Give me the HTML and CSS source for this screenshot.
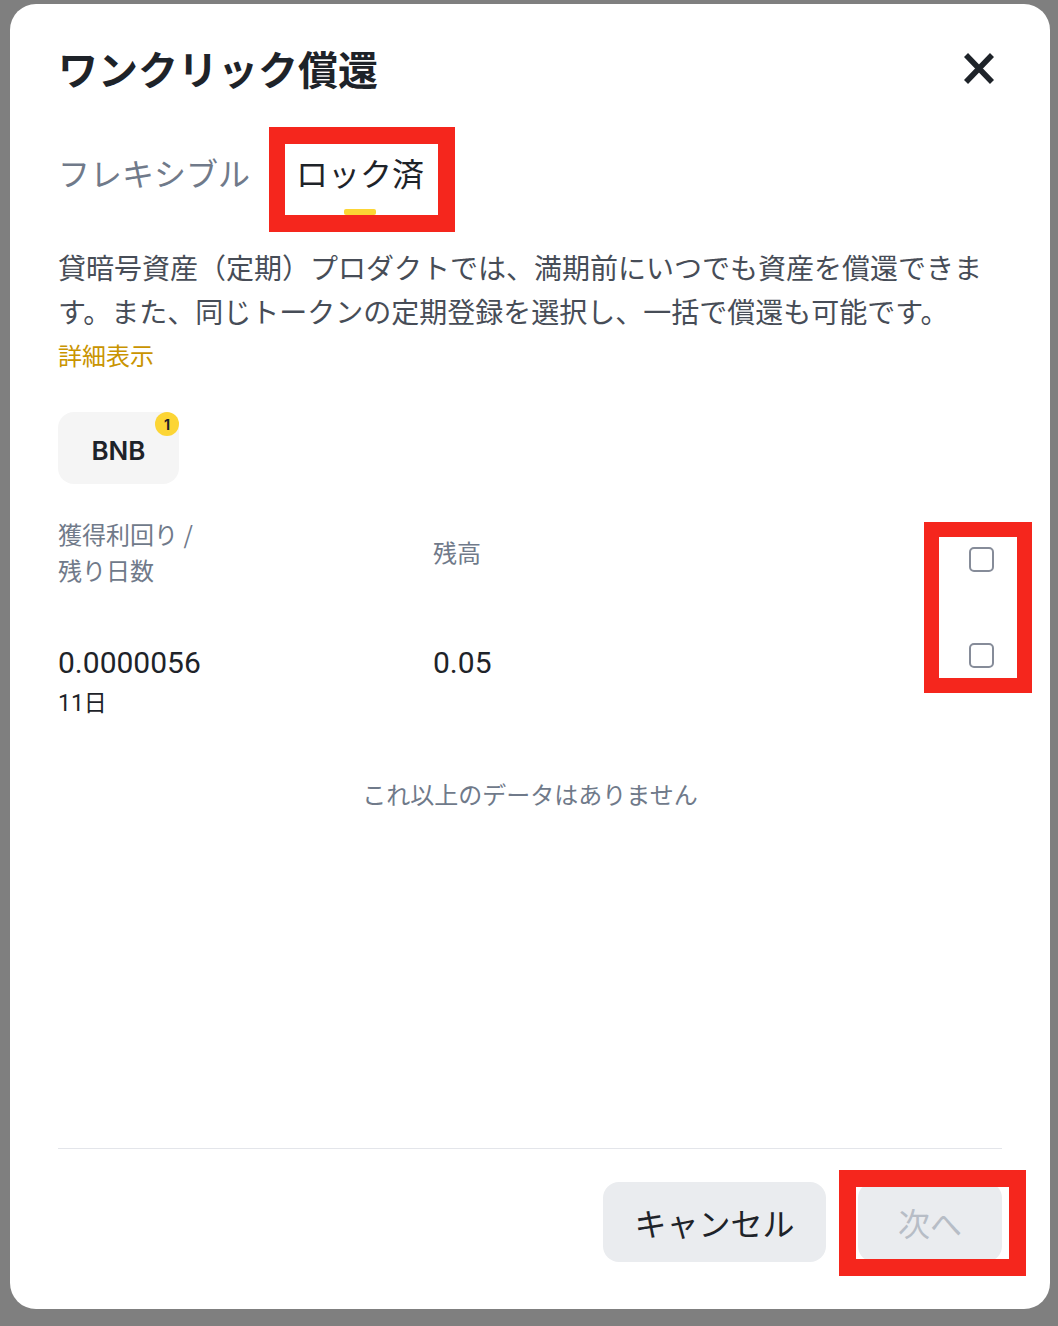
FILE: index.html
```html
<!DOCTYPE html>
<html lang="ja">
<head>
<meta charset="utf-8">
<title>ワンクリック償還</title>
<link rel="stylesheet" href="styles.css">
</head>
<body>
<div class="modal">
  <div class="header">
    <h1 class="title">ワンクリック償還</h1>
    <svg class="close" width="30" height="31" viewBox="0 0 30 31" aria-label="閉じる">
      <path d="M2 2 L28 29 M28 2 L2 29" stroke="#1e2329" stroke-width="5.6" fill="none"/>
    </svg>
  </div>

  <div class="tabs">
    <div class="tab"><span class="tab-label">フレキシブル</span></div>
    <div class="tab active"><span class="tab-label">ロック済</span><span class="tab-ink"></span></div>
  </div>

  <p class="desc">貸暗号資産（定期）プロダクトでは、満期前にいつでも資産を償還できます。また、同じトークンの定期登録を選択し、一括で償還も可能です。</p>
  <a class="more">詳細表示</a>

  <div class="chips">
    <div class="chip">BNB<span class="badge">1</span></div>
  </div>

  <div class="table">
    <div class="th th-yield">獲得利回り /<br>残り日数</div>
    <div class="th th-balance">残高</div>
    <div class="checkbox cb-head"></div>

    <div class="td td-yield"><div class="val">0.0000056</div><div class="sub">11日</div></div>
    <div class="td td-balance"><div class="val">0.05</div></div>
    <div class="checkbox cb-row"></div>
  </div>

  <div class="nomore">これ以上のデータはありません</div>

  <div class="spacer"></div>
  <div class="divider"></div>

  <div class="footer">
    <button class="btn btn-cancel">キャンセル</button>
    <button class="btn btn-next" disabled>次へ</button>
  </div>

  <div class="mark mark-tab"></div>
  <div class="mark mark-check"></div>
  <div class="mark mark-next"></div>
</div>
</body>
</html>
```

FILE: styles.css
```css
* { box-sizing: border-box; }

html, body {
  margin: 0;
  padding: 0;
}

body {
  width: 1058px;
  height: 1326px;
  background: #7f7f7f;
  overflow: hidden;
  font-family: "Noto Sans CJK JP", "Noto Sans", sans-serif;
  color: #1e2329;
}

.modal {
  position: relative;
  margin: 4px 0 0 10px;
  width: 1040px;
  height: 1305px;
  background: #ffffff;
  border-radius: 26px;
  padding: 36px 48px 47px 48px;
  display: flex;
  flex-direction: column;
}

.header {
  display: flex;
  align-items: center;
  justify-content: space-between;
  height: 56px;
}

.title {
  margin: 0;
  font-size: 40px;
  line-height: 56px;
  font-weight: 700;
  color: #1e2329;
  white-space: nowrap;
}

.close {
  display: block;
  margin-right: 8px;
  margin-top: 1px;
}

.tabs {
  display: flex;
  align-items: flex-start;
  gap: 46px;
  margin-top: 52px;
}

.tab {
  display: flex;
  flex-direction: column;
  align-items: center;
  font-size: 32px;
  line-height: 48px;
  color: #707a8a;
  white-space: nowrap;
}

.tab.active {
  color: #1e2329;
}

.tab-ink {
  display: block;
  width: 32px;
  height: 6px;
  margin-top: 13px;
  border-radius: 2px;
  background: #fcd535;
}

.desc {
  margin: 30px 0 0 0;
  font-size: 28px;
  line-height: 44px;
  color: #474d57;
}

.more {
  display: block;
  font-size: 24px;
  line-height: 44px;
  color: #c99400;
  cursor: pointer;
}

.chips {
  display: flex;
  margin-top: 35px;
}

.chip {
  position: relative;
  width: 121px;
  height: 72px;
  padding-top: 4px;
  border-radius: 16px;
  background: #f5f5f5;
  display: flex;
  align-items: center;
  justify-content: center;
  font-family: Inter, "Noto Sans CJK JP", sans-serif;
  font-weight: 600;
  font-size: 26px;
  color: #1e2329;
}

.badge {
  position: absolute;
  top: 0;
  right: 0;
  width: 24px;
  height: 24px;
  border-radius: 50%;
  background: #fcd535;
  display: flex;
  align-items: center;
  justify-content: center;
  font-size: 14px;
  font-weight: 700;
  color: #1e2329;
}

.table {
  display: grid;
  grid-template-columns: 375px 1fr 25px;
  row-gap: 54px;
  padding-right: 8px;
  margin-top: 32px;
}

.th {
  font-size: 24px;
  line-height: 36px;
  color: #707a8a;
}

.th-balance {
  align-self: center;
}

.checkbox {
  width: 25px;
  height: 25px;
  border: 2px solid #868c99;
  border-radius: 5px;
  align-self: start;
}

.cb-head { margin-top: 31px; }
.cb-row { margin-top: 1px; }

.td {
  font-family: Roboto, "Noto Sans CJK JP", sans-serif;
  color: #1e2329;
}

.val {
  font-size: 30px;
  line-height: 42px;
}

.sub {
  font-size: 23px;
  line-height: 40px;
}

.nomore {
  margin-top: 52px;
  text-align: center;
  font-size: 24px;
  line-height: 36px;
  color: #707a8a;
}

.spacer { flex: 1; }

.divider {
  height: 1px;
  background: #e3e5ea;
}

.footer {
  display: flex;
  justify-content: flex-end;
  gap: 32px;
  margin-top: 33px;
}

.btn {
  height: 80px;
  border: none;
  border-radius: 16px;
  background: #eaecef;
  font-family: "Noto Sans CJK JP", sans-serif;
  font-size: 32px;
  line-height: 48px;
  padding: 0;
  white-space: nowrap;
  color: #1e2329;
}

.btn-cancel { width: 223px; }

.btn-next {
  width: 144px;
  color: #b7bdc6;
}

.mark {
  position: absolute;
  border-style: solid;
  border-color: #f5261d;
  pointer-events: none;
}

.mark-tab {
  left: 259px;
  top: 123px;
  width: 186px;
  height: 105px;
  border-width: 17px 17px 17px 16px;
}

.mark-check {
  left: 914px;
  top: 518px;
  width: 108px;
  height: 171px;
  border-width: 15px;
}

.mark-next {
  left: 829px;
  top: 1166px;
  width: 187px;
  height: 106px;
  border-width: 17px;
}
```
